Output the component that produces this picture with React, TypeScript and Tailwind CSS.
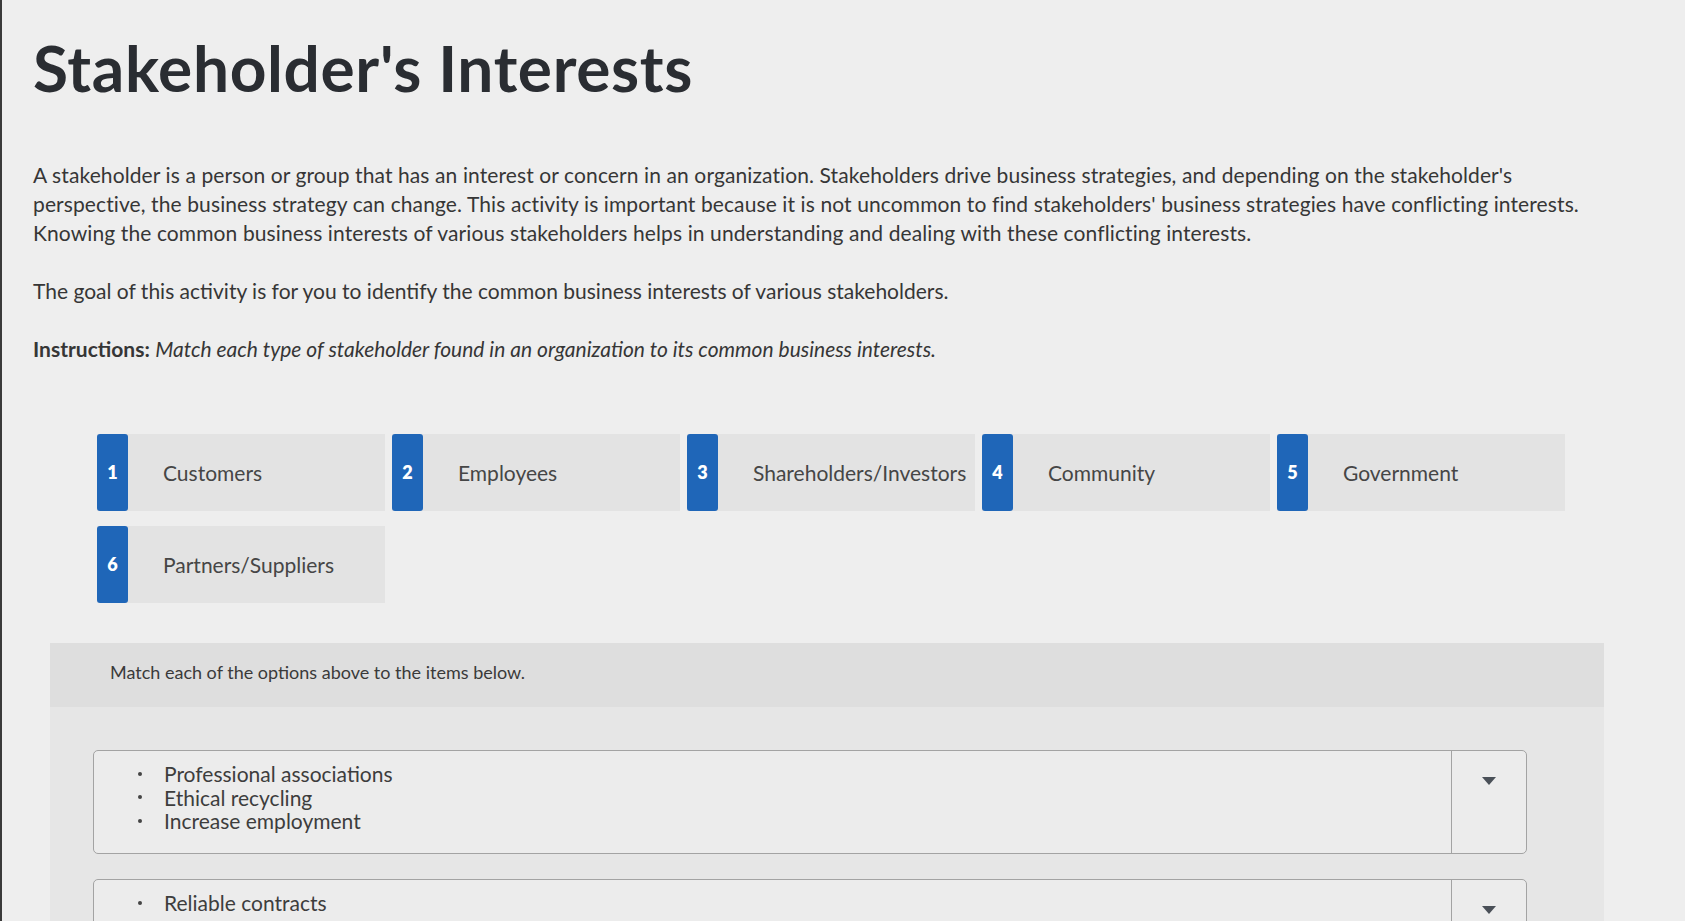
import React from "react";

const tiles = [
  { n: "1", label: "Customers" },
  { n: "2", label: "Employees" },
  { n: "3", label: "Shareholders/Investors" },
  { n: "4", label: "Community" },
  { n: "5", label: "Government" },
  { n: "6", label: "Partners/Suppliers" },
];

function Tile({ n, label }: { n: string; label: string }) {
  return (
    <div className="flex h-[77px] w-[288px] items-stretch bg-[#e3e3e3]">
      <div className="flex w-[31px] items-center justify-center rounded-[3px] bg-[#1f66b8] text-[18px] font-extrabold text-white">
        {n}
      </div>
      <div className="flex items-center pl-[35px] text-[21px] text-[#464646]">{label}</div>
    </div>
  );
}

function Arrow() {
  return (
    <svg width="14" height="8" viewBox="0 0 14 8">
      <path d="M0 0 L14 0 L7 8 Z" fill="#4a5058" />
    </svg>
  );
}

function Dropdown({ items, h }: { items: string[]; h: string }) {
  return (
    <div className={`flex w-[1434px] rounded-[5px] border border-[#a3a3a3] bg-[#ececec] ${h}`}>
      <ul className="flex-1 pl-[44px] pt-[11px] text-[21px] leading-[23.5px] text-[#3d3d3d]">
        {items.map((it) => (
          <li key={it} className="flex items-center">
            <span className="mr-[22px] inline-block h-[4px] w-[4px] rounded-full bg-[#444]" />
            {it}
          </li>
        ))}
      </ul>
      <div className="flex w-[75px] justify-center border-l border-[#a3a3a3] pt-[26px]">
        <Arrow />
      </div>
    </div>
  );
}

export default function App() {
  return (
    <div
      className="h-[921px] w-full overflow-hidden border-l-2 border-[#3a3a3a] bg-[#eeeeee]"
      style={{ fontFamily: "Lato, 'Open Sans', sans-serif" }}
    >
      <div className="pl-[31px] pt-[34px]">
        <h1 className="text-[64px] font-bold leading-[68px] tracking-[0.01em] text-[#2a2d32]">Stakeholder's Interests</h1>
        <p className="mt-[58px] whitespace-nowrap text-[21px] leading-[29px] tracking-[0.005em] text-[#363636]">
          A stakeholder is a person or group that has an interest or concern in an organization. Stakeholders drive business strategies, and depending on the stakeholder's
          <br />
          perspective, the business strategy can change. This activity is important because it is not uncommon to find stakeholders' business strategies have conflicting interests.
          <br />
          Knowing the common business interests of various stakeholders helps in understanding and dealing with these conflicting interests.
        </p>
        <p className="mt-[29px] text-[21px] leading-[29px] text-[#363636]">
          The goal of this activity is for you to identify the common business interests of various stakeholders.
        </p>
        <p className="mt-[29px] text-[21px] leading-[29px] text-[#363636]">
          <span className="font-bold">Instructions:</span>{" "}
          <span className="italic">Match each type of stakeholder found in an organization to its common business interests.</span>
        </p>
      </div>

      <div className="ml-[95px] mt-[71px] flex w-[1480px] flex-wrap gap-x-[7px] gap-y-[15px]">
        {tiles.map((t) => (
          <Tile key={t.n} n={t.n} label={t.label} />
        ))}
      </div>

      <div className="ml-[48px] mt-[40px] w-[1554px] bg-[#e6e6e6] pb-[40px]">
        <div className="flex h-[64px] items-center bg-[#dedede] pb-[6px] pl-[60px] text-[18px] text-[#3a3a3a]">
          Match each of the options above to the items below.
        </div>
        <div className="ml-[43px] mt-[43px] flex flex-col gap-[25px]">
          <Dropdown h="h-[104px]" items={["Professional associations", "Ethical recycling", "Increase employment"]} />
          <Dropdown h="h-[104px]" items={["Reliable contracts"]} />
        </div>
      </div>
    </div>
  );
}
